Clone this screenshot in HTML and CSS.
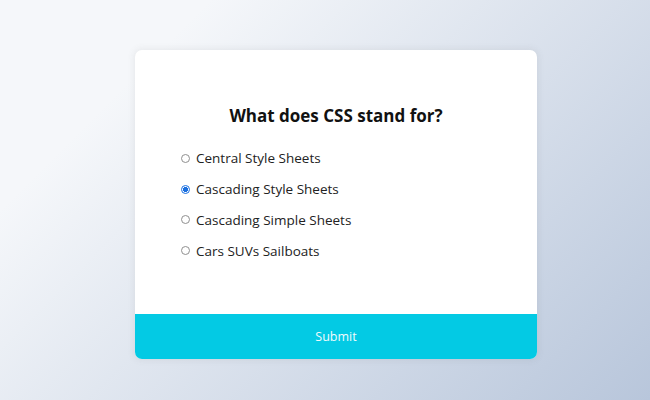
FILE: index.html
```html
<!DOCTYPE html>
<html lang="en">
<head>
<meta charset="UTF-8">
<title>Quiz</title>
<link rel="stylesheet" href="styles.css">
</head>
<body>
  <div class="quiz-container">
    <div class="quiz-header">
      <h2 class="question">What does CSS stand for?</h2>
      <ul class="answers">
        <li><label><input type="radio" name="answer" class="answer"><span>Central Style Sheets</span></label></li>
        <li><label><input type="radio" name="answer" class="answer" checked><span>Cascading Style Sheets</span></label></li>
        <li><label><input type="radio" name="answer" class="answer"><span>Cascading Simple Sheets</span></label></li>
        <li><label><input type="radio" name="answer" class="answer"><span>Cars SUVs Sailboats</span></label></li>
      </ul>
    </div>
    <button class="submit">Submit</button>
  </div>
</body>
</html>
```
FILE: styles.css
```css
* { box-sizing: border-box; }
html, body { height: 100%; }
body {
  margin: 0;
  background-color: #b8c6db;
  background-image: linear-gradient(315deg, #b8c6db 0%, #f5f7fa 80%);
  font-family: "Open Sans", "DejaVu Sans", sans-serif;
  display: flex;
  align-items: center;
  justify-content: center;
  padding: 9px 0 0 22px;
}
.quiz-container {
  width: 402px;
  background: #fff;
  border-radius: 7px;
  box-shadow: 0 0 7px 1px rgba(100, 100, 100, 0.1);
  overflow: hidden;
}
.quiz-header {
  padding: 43px 46px;
}
.question {
  margin: 0;
  padding: 10px 0;
  text-align: center;
  font-size: 17px;
  line-height: 25px;
  font-weight: 700;
  color: #111;
}
.answers {
  list-style: none;
  margin: 0;
  padding: 0;
}
.answers li {
  margin: 10.7px 0;
  font-size: 13.5px;
  line-height: 20px;
  color: #222;
}
.answers label {
  display: flex;
  align-items: center;
  gap: 6px;
}
.answer {
  appearance: none;
  -webkit-appearance: none;
  margin: 0;
  width: 9px;
  height: 9px;
  border: 1px solid #8f8f8f;
  border-radius: 50%;
  background: #fff;
  flex: none;
}
.answer:checked {
  border-color: #1a6fe0;
  background: radial-gradient(circle, #1a6fe0 0 2.3px, #fff 2.6px);
}
.submit {
  display: block;
  width: 100%;
  height: 45px;
  border: none;
  background: #03cae4;
  color: #f2fbfd;
  font-family: inherit;
  font-size: 12.5px;
  padding: 0;
  margin: 0;
}
```
